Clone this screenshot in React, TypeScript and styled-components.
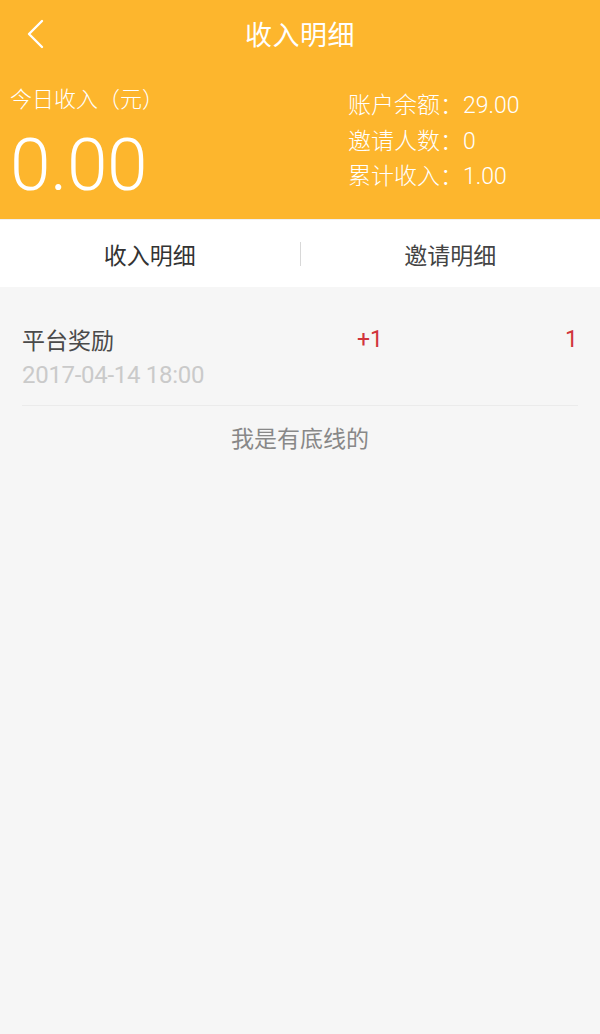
import React from "react"
import styled, { createGlobalStyle } from "styled-components"

const GlobalStyle = createGlobalStyle`
	html, body {
		margin: 0;
		padding: 0;
		background: #f6f6f6;
	}
	body {
		font-family: Roboto, "Noto Sans CJK SC", sans-serif;
		-webkit-font-smoothing: antialiased;
	}
`

const Page = styled.div`
	width: 600px;
	min-height: 1034px;
	background: #f6f6f6;
`

const Hero = styled.div`
	background: #fdb62d;
	color: #fff;
`

const TopBar = styled.div`
	position: relative;
	height: 66px;
	display: flex;
	align-items: center;
	justify-content: center;
`

const BackButton = styled.button`
	position: absolute;
	left: 22px;
	top: 18px;
	width: 26px;
	height: 32px;
	padding: 0;
	border: none;
	background: transparent;
	display: flex;
	align-items: center;
	justify-content: center;
	cursor: pointer;
`

const Title = styled.h1`
	margin: 0;
	font-size: 27px;
	font-weight: 400;
	letter-spacing: 0.5px;
`

const Summary = styled.div`
	height: 153px;
	display: flex;
	padding-left: 10px;
	box-sizing: border-box;
`

const TodayCol = styled.div`
	flex: 1;
	padding-top: 19px;
`

const TodayLabel = styled.div`
	font-size: 22px;
	line-height: 30px;
	font-weight: 300;
`

const TodayValue = styled.div`
	margin-top: 12px;
	font-size: 73px;
	line-height: 76px;
	font-weight: 300;
	letter-spacing: -0.5px;
`

const StatsCol = styled.div`
	width: 252px;
	padding-top: 22px;
`

const StatLine = styled.div`
	font-size: 23px;
	line-height: 35.5px;
	font-weight: 300;
	white-space: nowrap;
`

const Tabs = styled.div`
	height: 67px;
	background: #fff;
	display: flex;
	align-items: center;
	border-top: 1px solid #f0f0f0;
`

const Tab = styled.div<{ active?: boolean }>`
	flex: 1;
	text-align: center;
	font-size: 23px;
	color: ${(p) => (p.active ? "#333" : "#444")};
`

const TabDivider = styled.div`
	width: 1px;
	height: 24px;
	background: #d8d8d8;
`

const List = styled.div`
	padding: 0 22px;
`

const Record = styled.div`
	padding: 37px 0 15px;
	border-bottom: 1px solid #ebebeb;
	display: grid;
	grid-template-columns: 335px 1fr auto;
	grid-template-rows: 30px 30px;
	row-gap: 6px;
	align-items: center;
`

const RecordName = styled.div`
	font-size: 23px;
	color: #4a4a4a;
`

const Amount = styled.div`
	font-size: 23px;
	color: #d1343c;
`

const RecordDate = styled.div`
	grid-column: 1 / 3;
	font-size: 24px;
	letter-spacing: -0.3px;
	color: #cacaca;
`

const EndNote = styled.div`
	margin-top: 19px;
	text-align: center;
	font-size: 23px;
	line-height: 30px;
	color: #888;
`

const stats = [
	{ label: "账户余额", value: "29.00" },
	{ label: "邀请人数", value: "0" },
	{ label: "累计收入", value: "1.00" },
]

export default function App() {
	return (
		<>
			<GlobalStyle />
			<Page>
				<Hero>
					<TopBar>
						<BackButton aria-label="返回">
							<svg width="18" height="30" viewBox="0 0 18 30" fill="none">
								<polyline points="16,2 3,15 16,28" stroke="#fff" strokeWidth="2.4" strokeLinecap="round" strokeLinejoin="round" />
							</svg>
						</BackButton>
						<Title>收入明细</Title>
					</TopBar>
					<Summary>
						<TodayCol>
							<TodayLabel>今日收入（元）</TodayLabel>
							<TodayValue>0.00</TodayValue>
						</TodayCol>
						<StatsCol>
							{stats.map((s) => (
								<StatLine key={s.label}>
									{s.label}：{s.value}
								</StatLine>
							))}
						</StatsCol>
					</Summary>
				</Hero>
				<Tabs>
					<Tab active>收入明细</Tab>
					<TabDivider />
					<Tab>邀请明细</Tab>
				</Tabs>
				<List>
					<Record>
						<RecordName>平台奖励</RecordName>
						<Amount>+1</Amount>
						<Amount>1</Amount>
						<RecordDate>2017-04-14 18:00</RecordDate>
					</Record>
					<EndNote>我是有底线的</EndNote>
				</List>
			</Page>
		</>
	)
}
